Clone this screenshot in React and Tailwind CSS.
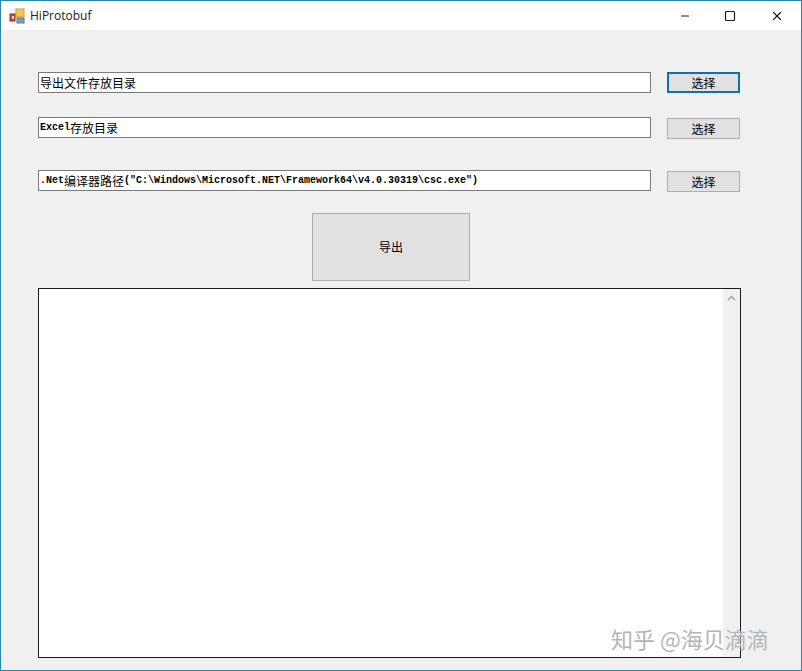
import { Minus, Square, X } from 'lucide-react';

const AppIcon = () => (
    <svg width="16" height="16" viewBox="0 0 16 16" className="shrink-0">
        <rect x="0.5" y="0.5" width="15" height="15" fill="#f4f4f4" />
        <rect x="7" y="1" width="8" height="8" fill="#f2c84b" stroke="#c9a233" />
        <rect x="1" y="6" width="5" height="7" fill="#b5473c" stroke="#8f3a34" />
        <rect x="3" y="8" width="2" height="3" fill="#f0d5d0" />
        <rect x="8" y="10" width="7" height="5" fill="#7d9cc4" stroke="#5f7fa8" />
    </svg>
);

const FieldText = ({ parts }) => (
    <div className="flex items-center whitespace-pre leading-none text-black">
        {parts.map((part, i) => (
            <span
                key={i}
                className={part.cjk ? 'text-[12px] [font-family:"Noto_Sans_CJK_SC",sans-serif]' : 'text-[10px] font-bold [font-family:"Liberation_Mono",monospace]'}
            >
                {part.text}
            </span>
        ))}
    </div>
);

const Field = ({ parts }) => (
    <div className="flex h-[21px] w-[613px] items-center border border-[#7a7a7a] bg-white pl-[1px]">
        <FieldText parts={parts} />
    </div>
);

const SelectButton = ({ focused, offset }) => (
    <button
        className={`h-[21px] w-[73px] bg-[#e1e1e1] text-[12px] text-black [font-family:"Noto_Sans_CJK_SC",sans-serif] ${
            focused ? 'border-2 border-[#0f6fb0]' : 'border border-[#adadad]'
        } ${offset ? 'mt-[1px]' : ''}`}
    >
        选择
    </button>
);

export default function App() {
    return (
        <div className="relative flex h-[671px] w-[802px] flex-col overflow-hidden border border-[#2b87a8] bg-[#f0f0f0]">
            {/* Title bar */}
            <div className="flex h-[29px] shrink-0 items-center bg-white pl-[8px]">
                <AppIcon />
                <span className="ml-[5px] text-[12px] text-[#1a1a1a] [font-family:'Open_Sans',sans-serif]">HiProtobuf</span>
                <div className="ml-auto flex items-center pr-[17px] text-[#1a1a1a]">
                    <Minus size={12} strokeWidth={1.2} className="mr-[33px]" absoluteStrokeWidth />
                    <Square size={12} strokeWidth={1.2} className="mr-[34px]" absoluteStrokeWidth />
                    <X size={14} strokeWidth={1.2} absoluteStrokeWidth />
                </div>
            </div>

            {/* Form */}
            <div className="flex flex-col pl-[37px] pt-[42px]">
                <div className="flex items-start gap-[16px]">
                    <Field parts={[{ text: '导出文件存放目录', cjk: true }]} />
                    <SelectButton focused />
                </div>
                <div className="mt-[24px] flex items-start gap-[16px]">
                    <Field parts={[{ text: 'Excel' }, { text: '存放目录', cjk: true }]} />
                    <SelectButton offset />
                </div>
                <div className="mt-[31px] flex items-start gap-[16px]">
                    <Field
                        parts={[
                            { text: '.Net' },
                            { text: '编译器路径', cjk: true },
                            { text: '("C:\\Windows\\Microsoft.NET\\Framework64\\v4.0.30319\\csc.exe")' },
                        ]}
                    />
                    <SelectButton offset />
                </div>

                <button className='ml-[274px] mt-[21px] h-[68px] w-[158px] border border-[#adadad] bg-[#e1e1e1] text-[12px] text-black [font-family:"Noto_Sans_CJK_SC",sans-serif]'>
                    导出
                </button>

                {/* Output log */}
                <div className="mt-[7px] flex h-[370px] w-[703px] justify-end border border-[#1a1a1a] bg-white">
                    <div className="flex w-[17px] justify-center bg-[#f0f0f0] pt-[6px]">
                        <svg width="9" height="6" viewBox="0 0 9 6" fill="none" stroke="#a3a3a3" strokeWidth="1.5">
                            <path d="M1 5 L4.5 1.5 L8 5" />
                        </svg>
                    </div>
                </div>
            </div>

            {/* Watermark */}
            <div className='absolute left-[610px] top-[622px] whitespace-pre text-[22px] leading-[30px] text-[#b4b4b4] [font-family:"Noto_Sans_CJK_SC",sans-serif] [text-shadow:0_0_2px_rgba(255,255,255,0.8)]'>
                知乎 @海贝滴滴
            </div>
        </div>
    );
}
